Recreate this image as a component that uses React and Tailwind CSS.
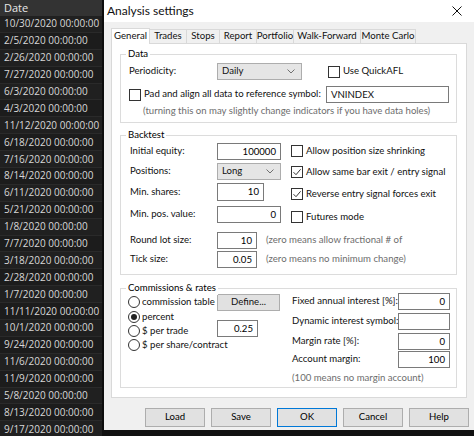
import React from "react";

const dates = [
  "10/30/2020", "2/5/2020", "2/26/2020", "7/27/2020", "6/3/2020", "4/3/2020",
  "11/12/2020", "6/18/2020", "7/16/2020", "8/14/2020", "6/11/2020", "5/21/2020",
  "1/8/2020", "7/7/2020", "3/18/2020", "2/28/2020", "1/7/2020", "11/11/2020",
  "10/1/2020", "9/24/2020", "11/6/2020", "11/9/2020", "5/8/2020", "8/13/2020",
  "9/17/2020",
];

const tabs = [
  { name: "General", w: "w-[39px]" },
  { name: "Trades", w: "w-[37px]" },
  { name: "Stops", w: "w-[33px]" },
  { name: "Report", w: "w-[37px]" },
  { name: "Portfolio", w: "w-[37px]" },
  { name: "Walk-Forward", w: "w-[67px]" },
  { name: "Monte Carlo", w: "w-[55px]" },
];

const Checkbox = ({ checked }) => (
  <span className="w-[12px] h-[12px] shrink-0 border border-[#333] bg-white flex items-center justify-center">
    {checked && (
      <svg width="10" height="10" viewBox="0 0 10 10">
        <path d="M1.5 5.2 L4 7.7 L8.6 2.3" fill="none" stroke="#333" strokeWidth="1" />
      </svg>
    )}
  </span>
);

const Radio = ({ checked }) => (
  <span className="w-[12px] h-[12px] shrink-0 rounded-full border border-[#333] bg-white flex items-center justify-center">
    {checked && <span className="w-[6px] h-[6px] rounded-full bg-[#222]" />}
  </span>
);

const TextBox = ({ value, className }) => (
  <div
    className={`h-[17px] border border-[#7a7a7a] bg-white text-right pr-[4px] leading-[15px] text-black ${className}`}
  >
    {value}
  </div>
);

const Select = ({ value, className }) => (
  <div
    className={`h-[17px] border border-[#adadad] bg-[#e5e5e5] flex items-center justify-between pl-[4px] pr-[6px] ${className}`}
  >
    <span>{value}</span>
    <svg width="8" height="5" viewBox="0 0 8 5">
      <path d="M0.5 0.5 L4 4 L7.5 0.5" fill="none" stroke="#707070" strokeWidth="1" />
    </svg>
  </div>
);

const Group = ({ label, className, children }) => (
  <div className={`relative border border-[#dcdcdc] ${className}`}>
    <span className="absolute -top-[8px] left-[5px] px-[2px] bg-white leading-[14px] text-black">
      {label}
    </span>
    {children}
  </div>
);

const Button = ({ children, primary }) => (
  <div
    className={`w-[60px] h-[19px] flex items-center justify-center bg-[#e1e1e1] border ${
      primary ? "border-[#0078d7]" : "border-[#adadad]"
    } text-black`}
  >
    {children}
  </div>
);

const CheckRow = ({ checked, label, className }) => (
  <div className={`flex items-center gap-[3px] h-[14px] ${className}`}>
    <Checkbox checked={checked} />
    <span>{label}</span>
  </div>
);

const RadioRow = ({ checked, label, className }) => (
  <div className={`flex items-center gap-[2px] h-[14px] ${className}`}>
    <Radio checked={checked} />
    <span>{label}</span>
  </div>
);

export default function App() {
  return (
    <div className="w-[474px] h-[436px] overflow-hidden flex bg-[#111] whitespace-nowrap font-['Lato',sans-serif] text-[9.6px]">
      {/* results list behind the dialog */}
      <div className="w-[102px] shrink-0 bg-[#1e1e1e] text-[#d8d8d8] text-[10px] font-['Open_Sans',sans-serif]">
        <div className="h-[16px] bg-[#333333] flex items-center pl-[4px] text-[11px] text-[#e8e8e8]">
          Date
        </div>
        {dates.map((d, i) => (
          <div
            key={i}
            className={`h-[16.9px] flex items-center pl-[4px] border-b border-[#2a2a2a] ${
              i % 2 ? "bg-[#1c1c1c]" : "bg-[#202020]"
            }`}
          >
            {d} 00:00:00
          </div>
        ))}
      </div>

      {/* dialog */}
      <div className="w-[372px] h-[430px] shrink-0 border-l-2 border-[#0d0d0d] flex flex-col bg-[#f0f0f0] text-[#111]">
        <div className="h-[22px] bg-white flex items-center justify-between pl-[3px] pr-[12px] text-[12px]">
          <span>Analysis settings</span>
          <svg width="10" height="10" viewBox="0 0 10 10">
            <path d="M0.5 0.5 L9.5 9.5 M9.5 0.5 L0.5 9.5" stroke="#111" strokeWidth="1" />
          </svg>
        </div>

        {/* tab strip */}
        <div className="mt-[6px] h-[15px] flex items-end pl-[7px] relative z-10">
          {tabs.map((t, i) =>
            i === 0 ? (
              <div
                key={t.name}
                className={`${t.w} h-[16px] -mb-px bg-white border-t border-l border-r border-[#d9d9d9] flex items-center justify-center`}
              >
                {t.name}
              </div>
            ) : (
              <div
                key={t.name}
                className={`${t.w} h-[14px] border-t border-r border-[#d9d9d9] flex items-center justify-center`}
              >
                {t.name}
              </div>
            )
          )}
        </div>

        {/* tab panel */}
        <div className="mx-[7px] h-[355px] bg-white border border-[#d9d9d9] pl-[8px] pr-[9px]">
          {/* Data */}
          <Group label="Data" className="mt-[10px] h-[69px]">
            <div className="mt-[8px] h-[17px] flex items-center pl-[8px]">
              <span className="w-[88px]">Periodicity:</span>
              <Select value="Daily" className="w-[85px]" />
              <CheckRow label="Use QuickAFL" className="ml-[26px]" />
            </div>
            <div className="mt-[6px] h-[17px] flex items-center pl-[8px] pr-[7px]">
              <Checkbox />
              <span className="ml-[3px]">Pad and align all data to reference symbol:</span>
              <div className="ml-auto w-[123px] h-[17px] border border-[#7a7a7a] bg-white pl-[4px] leading-[15px]">
                VNINDEX
              </div>
            </div>
            <div className="mt-[2px] h-[12px] leading-[12px] pl-[22px] text-[#6d6d6d]">
              (turning this on may slightly change indicators if you have data holes)
            </div>
          </Group>

          {/* Backtest */}
          <Group label="Backtest" className="mt-[12px] h-[140px]">
            <div className="flex">
              <div className="w-[170px] shrink-0 pl-[9px]">
                <div className="mt-[7px] h-[17px] flex items-center">
                  <span className="w-[87px]">Initial equity:</span>
                  <TextBox value="100000" className="w-[64px]" />
                </div>
                <div className="mt-[3px] h-[17px] flex items-center">
                  <span className="w-[87px]">Positions:</span>
                  <Select value="Long" className="w-[64px]" />
                </div>
                <div className="mt-[3px] h-[18px] flex items-center">
                  <span className="w-[87px]">Min. shares:</span>
                  <TextBox value="10" className="w-[47px] h-[18px]" />
                </div>
                <div className="mt-[5px] h-[17px] flex items-center">
                  <span className="w-[87px]">Min. pos. value:</span>
                  <TextBox value="0" className="w-[64px]" />
                </div>
              </div>
              <div className="flex-1">
                <CheckRow label="Allow position size shrinking" className="mt-[8px]" />
                <CheckRow checked label="Allow same bar exit / entry signal" className="mt-[7px]" />
                <CheckRow checked label="Reverse entry signal forces exit" className="mt-[8px]" />
                <CheckRow label="Futures mode" className="mt-[9px]" />
              </div>
            </div>
            <div className="mt-[8px] h-[16px] flex items-center pl-[9px]">
              <span className="w-[87px]">Round lot size:</span>
              <TextBox value="10" className="w-[40px] h-[16px] leading-[14px]" />
              <span className="ml-[9px] text-[#6d6d6d]">(zero means allow fractional # of</span>
            </div>
            <div className="mt-[3px] h-[17px] flex items-center pl-[9px]">
              <span className="w-[87px]">Tick size:</span>
              <TextBox value="0.05" className="w-[40px]" />
              <span className="ml-[9px] text-[#6d6d6d]">(zero means no minimum change)</span>
            </div>
          </Group>

          {/* Commissions & rates */}
          <Group label="Commissions & rates" className="mt-[13px] h-[100px]">
            <div className="flex">
              <div className="w-[171px] shrink-0 pl-[7px] flex">
                <div className="w-[89px] shrink-0 pt-[6px]">
                  <RadioRow label="commission table" />
                  <RadioRow checked label="percent" className="mt-[1px]" />
                  <RadioRow label="$ per trade" />
                  <RadioRow label="$ per share/contract" />
                </div>
                <div className="pt-[5px]">
                  <div className="w-[63px] h-[17px] flex items-center justify-center bg-[#e1e1e1] border border-[#adadad]">
                    Define...
                  </div>
                  <TextBox value="0.25" className="mt-[9px] w-[41px]" />
                </div>
              </div>
              <div className="flex-1 pt-[4px]">
                <div className="h-[17px] flex items-center">
                  <span className="w-[106px]">Fixed annual interest [%]:</span>
                  <TextBox value="0" className="w-[52px]" />
                </div>
                <div className="mt-[3px] h-[17px] flex items-center">
                  <span className="w-[106px]">Dynamic interest symbol:</span>
                  <TextBox value="" className="w-[52px]" />
                </div>
                <div className="mt-[3px] h-[17px] flex items-center">
                  <span className="w-[106px]">Margin rate [%]:</span>
                  <TextBox value="0" className="w-[52px]" />
                </div>
                <div className="mt-[1px] h-[17px] flex items-center">
                  <span className="w-[106px]">Account margin:</span>
                  <TextBox value="100" className="w-[52px]" />
                </div>
                <div className="mt-[4px] h-[12px] leading-[12px] text-[#6d6d6d]">
                  (100 means no margin account)
                </div>
              </div>
            </div>
          </Group>
        </div>

        {/* buttons */}
        <div className="mt-[10px] flex justify-end gap-[6px] pr-[5px]">
          <Button>Load</Button>
          <Button>Save</Button>
          <Button primary>OK</Button>
          <Button>Cancel</Button>
          <Button>Help</Button>
        </div>
      </div>
    </div>
  );
}
